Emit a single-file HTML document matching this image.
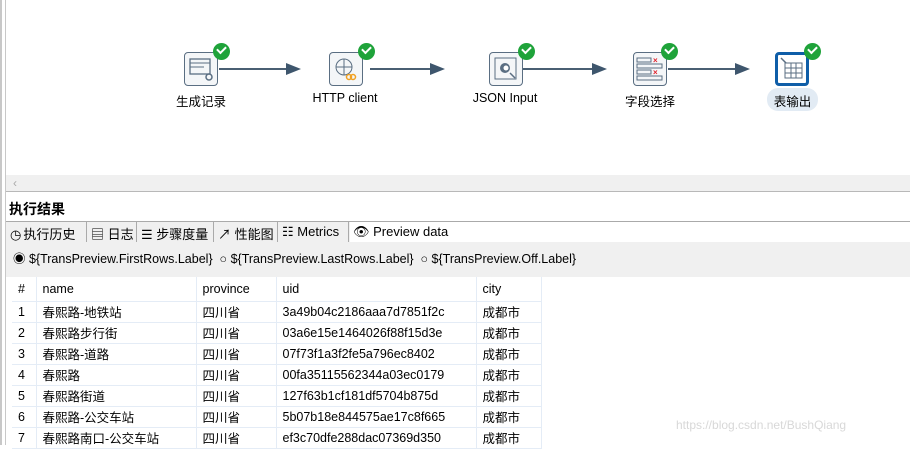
<!DOCTYPE html>
<html><head><meta charset="utf-8"><style>
*{margin:0;padding:0;box-sizing:border-box}
body{width:910px;height:445px;overflow:hidden;background:#fff;font-family:"Liberation Sans","Noto Sans CJK SC",sans-serif;font-size:12px;color:#000;position:relative}
.abs{position:absolute}
.node{position:absolute;top:52px;width:34px;height:34px;border:1.5px solid #5a6e82;border-radius:4px;background:#f4f6f8}
.chk{position:absolute;width:17px;height:17px;border-radius:50%;background:#1fa33a;top:43px}
.chk:after{content:"";position:absolute;left:4px;top:3px;width:7px;height:4px;border-left:2.5px solid #fff;border-bottom:2.5px solid #fff;transform:rotate(-45deg)}
.lbl{position:absolute;top:91px;font-size:12.5px;text-align:center}
.hop{position:absolute;top:68px;height:1.5px;background:#4a5f73}
.arr{position:absolute;top:63px;width:0;height:0;border-top:6px solid transparent;border-bottom:6px solid transparent;border-left:15px solid #3e566d}
table{border-collapse:collapse;position:absolute;left:12px;top:277px}
td{height:21px;border-right:1px solid #e4ecf6;border-bottom:1px solid #e4ecf6;padding-left:6px;font-size:12.5px;white-space:nowrap}
tr.h td{height:24px;background:#fff}
.tab{position:absolute;top:222px;height:20px;font-size:13px;padding-top:2px;border-right:1px solid #aaa}
</style></head><body>
<div class="abs" style="left:0;top:0;width:2px;height:445px;background:#c8c8c8"></div>
<div class="abs" style="left:5px;top:0;width:1px;height:445px;background:#c8c8c8"></div>

<div class="hop" style="left:219px;width:70px"></div><div class="arr" style="left:286px"></div>
<div class="hop" style="left:370px;width:62px"></div><div class="arr" style="left:430px"></div>
<div class="hop" style="left:523px;width:72px"></div><div class="arr" style="left:592px"></div>
<div class="hop" style="left:668px;width:70px"></div><div class="arr" style="left:735px"></div>

<div class="node" style="left:184px"><svg width="31" height="31"><rect x="5" y="6" width="20" height="15" fill="none" stroke="#5a6e82" stroke-width="1.3"/><line x1="5" y1="10" x2="25" y2="10" stroke="#5a6e82"/><line x1="5" y1="14" x2="19" y2="14" stroke="#5a6e82"/><circle cx="24" cy="24" r="3" fill="none" stroke="#5a6e82" stroke-width="1.5"/></svg></div>
<div class="chk" style="left:213px"></div>
<div class="lbl" style="left:170px;width:62px">生成记录</div>

<div class="node" style="left:329px"><svg width="31" height="31"><circle cx="14" cy="14" r="8" fill="none" stroke="#5a6e82"/><line x1="6" y1="14" x2="22" y2="14" stroke="#5a6e82"/><line x1="14" y1="6" x2="14" y2="22" stroke="#5a6e82"/><circle cx="19" cy="24" r="2.5" fill="none" stroke="#f0a020" stroke-width="1.5"/><circle cx="23" cy="24" r="2.5" fill="none" stroke="#f0a020" stroke-width="1.5"/></svg></div>
<div class="chk" style="left:358px"></div>
<div class="lbl" style="left:305px;width:80px">HTTP client</div>

<div class="node" style="left:489px"><svg width="31" height="31"><rect x="5" y="5" width="21" height="21" fill="none" stroke="#5a6e82"/><circle cx="15" cy="15" r="5" fill="#5a6e82"/><circle cx="16" cy="15" r="2.5" fill="#fff"/><line x1="20" y1="20" x2="25" y2="25" stroke="#5a6e82" stroke-width="1.5"/></svg></div>
<div class="chk" style="left:518px"></div>
<div class="lbl" style="left:463px;width:84px">JSON Input</div>

<div class="node" style="left:633px"><svg width="31" height="31"><rect x="3" y="5" width="14" height="4" fill="none" stroke="#5a6e82"/><rect x="3" y="11" width="25" height="4" fill="none" stroke="#5a6e82"/><rect x="3" y="17" width="14" height="4" fill="none" stroke="#5a6e82"/><rect x="3" y="23" width="25" height="4" fill="none" stroke="#5a6e82"/><text x="19" y="10" font-size="8" fill="#e0202a" font-weight="bold">×</text><text x="19" y="22" font-size="8" fill="#e0202a" font-weight="bold">×</text></svg></div>
<div class="chk" style="left:661px"></div>
<div class="lbl" style="left:612px;width:76px">字段选择</div>

<div class="node" style="left:775px;border:3px solid #0f5ea8;background:#fff"><svg width="28" height="28"><rect x="7" y="8" width="17" height="15" fill="none" stroke="#5a6e82"/><line x1="7" y1="13" x2="24" y2="13" stroke="#5a6e82"/><line x1="7" y1="18" x2="24" y2="18" stroke="#5a6e82"/><line x1="13" y1="8" x2="13" y2="23" stroke="#5a6e82"/><line x1="18" y1="8" x2="18" y2="23" stroke="#5a6e82"/><line x1="3" y1="3" x2="8" y2="8" stroke="#5a6e82" stroke-width="1.5"/></svg></div>
<div class="chk" style="left:804px"></div>
<div class="abs" style="left:767px;top:88px;width:51px;height:23px;border-radius:11px;background:#e2ebf4"></div>
<div class="lbl" style="left:767px;width:51px">表输出</div>

<div class="abs" style="left:6px;top:175px;width:904px;height:17px;background:#f0f0f0;border-bottom:1px solid #b8b8b8"></div>
<div class="abs" style="left:13px;top:176px;color:#aaa;font-size:12px">&lsaquo;</div>
<div class="abs" style="left:9px;top:199px;font-size:14px;font-weight:bold">执行结果</div>

<div class="abs" style="left:6px;top:221px;width:904px;height:1px;background:#aaa"></div>
<div class="abs" style="left:6px;top:222px;width:344px;height:20px;background:#f0f0f0"></div>
<div class="tab" style="left:10px;width:77px">◷<span style="margin-left:2px">执行历史</span></div>
<div class="tab" style="left:87px;width:50px;padding-left:4px">▤ 日志</div>
<div class="tab" style="left:137px;width:77px;padding-left:4px">☰ 步骤度量</div>
<div class="tab" style="left:214px;width:64px;padding-left:4px">↗ 性能图</div>
<div class="tab" style="left:278px;width:71px;padding-left:4px">☷ Metrics</div>
<div class="abs" style="left:350px;top:222px;width:100px;height:20px;background:#fff;font-size:13px;padding:2px 0 0 3px">👁&#xFE0E; Preview data</div>
<div class="abs" style="left:6px;top:242px;width:904px;height:35px;background:#f0f0f0"></div>
<div class="abs" style="left:13px;top:248px;font-size:12.5px">◉ ${TransPreview.FirstRows.Label}&nbsp; ○ ${TransPreview.LastRows.Label}&nbsp; ○ ${TransPreview.Off.Label}</div>

<div class="abs" style="left:6px;top:277px;width:904px;height:168px;background:#fff"></div>
<table>
<tr class="h"><td style="width:24px">#</td><td style="width:160px">name</td><td style="width:80px">province</td><td style="width:200px">uid</td><td style="width:65px">city</td></tr>
<tr><td>1</td><td>春熙路-地铁站</td><td>四川省</td><td>3a49b04c2186aaa7d7851f2c</td><td>成都市</td></tr>
<tr><td>2</td><td>春熙路步行街</td><td>四川省</td><td>03a6e15e1464026f88f15d3e</td><td>成都市</td></tr>
<tr><td>3</td><td>春熙路-道路</td><td>四川省</td><td>07f73f1a3f2fe5a796ec8402</td><td>成都市</td></tr>
<tr><td>4</td><td>春熙路</td><td>四川省</td><td>00fa35115562344a03ec0179</td><td>成都市</td></tr>
<tr><td>5</td><td>春熙路街道</td><td>四川省</td><td>127f63b1cf181df5704b875d</td><td>成都市</td></tr>
<tr><td>6</td><td>春熙路-公交车站</td><td>四川省</td><td>5b07b18e844575ae17c8f665</td><td>成都市</td></tr>
<tr><td>7</td><td>春熙路南口-公交车站</td><td>四川省</td><td>ef3c70dfe288dac07369d350</td><td>成都市</td></tr>
</table>
<div class="abs" style="left:676px;top:418px;color:#d8d8d8;font-size:12px">https://blog.csdn.net/BushQiang</div>
</body></html>
